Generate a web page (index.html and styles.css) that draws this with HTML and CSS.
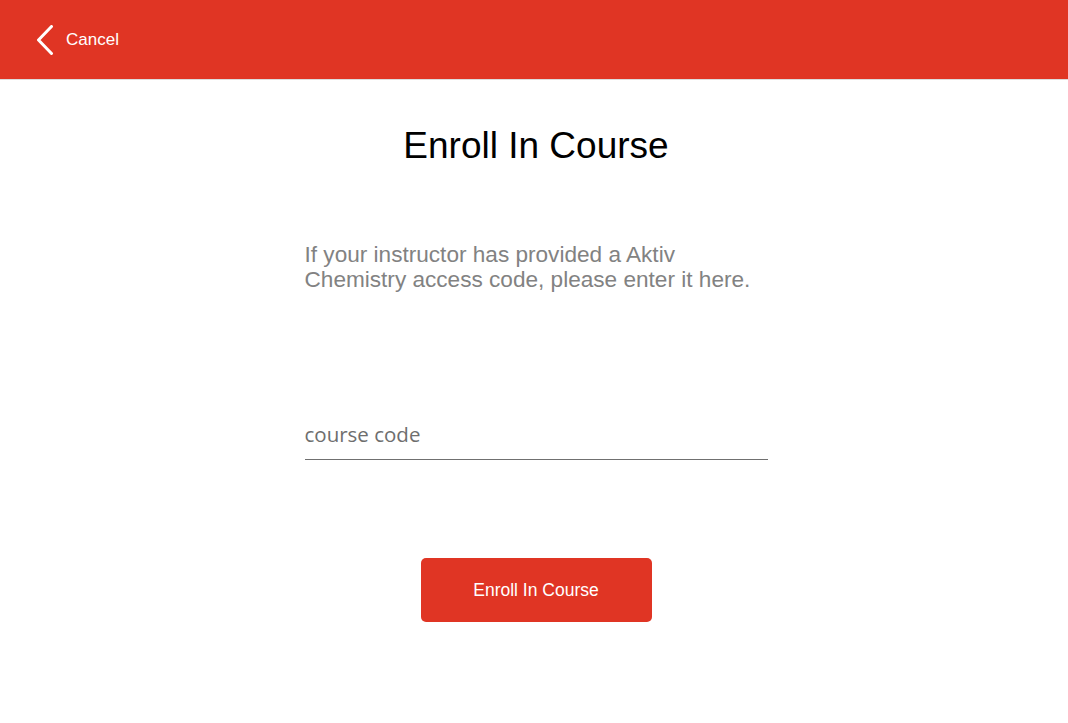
FILE: index.html
```html
<!DOCTYPE html>
<html lang="en">
<head>
<meta charset="utf-8">
<title>Enroll In Course</title>
<link rel="stylesheet" href="styles.css">
</head>
<body>
<header class="topbar">
  <a class="back" href="#">
    <svg class="back-icon" width="18" height="30" viewBox="0 0 18 30" aria-hidden="true">
      <polyline points="15.5,1.5 2.5,15 15.5,28.5" fill="none" stroke="#ffffff" stroke-width="3" stroke-linecap="round" stroke-linejoin="round"/>
    </svg>
    <span class="back-label">Cancel</span>
  </a>
</header>
<main class="content">
  <h1 class="title">Enroll In Course</h1>
  <div class="form">
    <p class="intro">If your instructor has provided a Aktiv Chemistry access code, please enter it here.</p>
    <div class="code-field"><span class="placeholder">course code</span></div>
  </div>
  <button class="enroll" type="button">Enroll In Course</button>
</main>
</body>
</html>
```
FILE: styles.css
```css
html, body {
  margin: 0;
  padding: 0;
  background: #ffffff;
}
body {
  font-family: "Liberation Sans", Arial, sans-serif;
}
.topbar {
  height: 79px;
  background: #e03524;
  border-bottom: 1px solid #dcdcdc;
  display: flex;
  align-items: center;
  padding-left: 36px;
}
.back {
  display: flex;
  align-items: center;
  gap: 12px;
  color: #ffffff;
  text-decoration: none;
}
.back-icon {
  display: block;
}
.back-label {
  font-size: 17px;
  line-height: 20px;
}
.content {
  display: flex;
  flex-direction: column;
  align-items: center;
  padding-top: 45px;
  padding-left: 4px;
}
.title {
  margin: 0;
  font-size: 37px;
  line-height: 42.5px;
  font-weight: 400;
  color: #000000;
}
.form {
  width: 463px;
}
.intro {
  margin: 74px 0 0 0;
  font-size: 22.6px;
  line-height: 25px;
  color: #828282;
}
.code-field {
  margin-top: 129px;
  padding-bottom: 11.5px;
  border-bottom: 1px solid #707070;
  font-family: "Open Sans", "Noto Sans", sans-serif;
  font-size: 20.5px;
  line-height: 27px;
  color: #6e6e6e;
}
.enroll {
  margin-top: 98px;
  width: 231px;
  height: 64px;
  border: none;
  border-radius: 5px;
  background: #e03524;
  color: #ffffff;
  font-family: "Liberation Sans", Arial, sans-serif;
  font-size: 17.5px;
  cursor: pointer;
}
```
